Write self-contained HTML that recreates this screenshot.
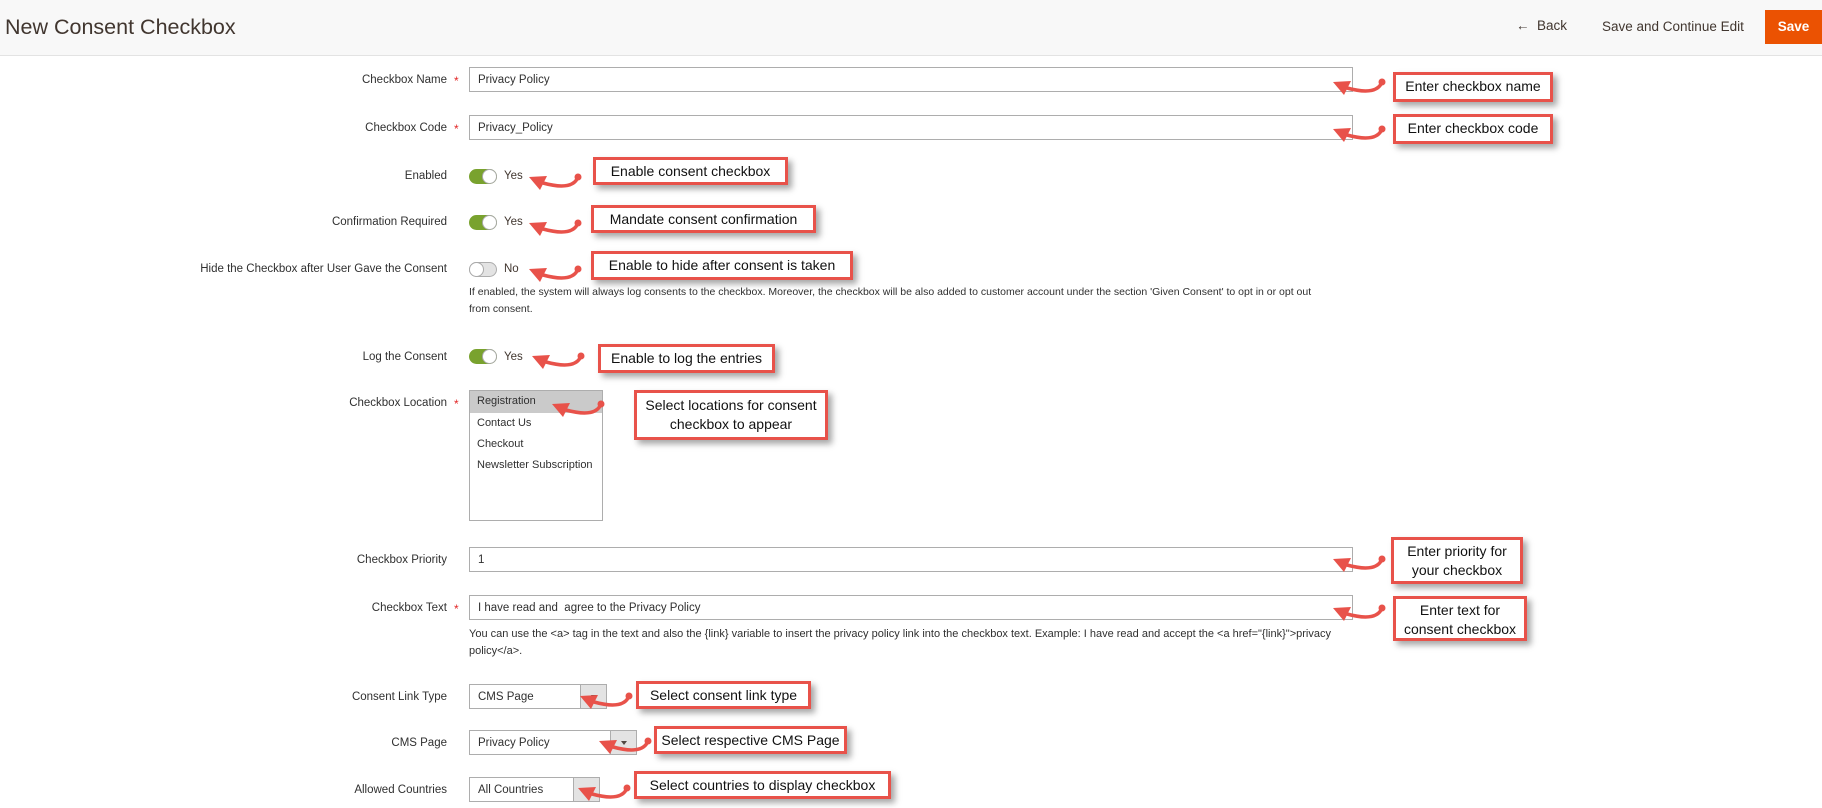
<!DOCTYPE html>
<html><head><meta charset="utf-8"><style>
*{box-sizing:border-box;margin:0;padding:0}
body{width:1822px;height:808px;background:#fff;font-family:"Liberation Sans",sans-serif;color:#303030;position:relative;overflow:hidden}
.a{position:absolute}
.hdr{left:0;top:0;width:1822px;height:56px;background:#f8f8f8;border-bottom:1px solid #e3e3e3}
.lbl{position:absolute;right:1375px;font-size:11.5px;color:#303030;white-space:nowrap;text-align:right}
.req{position:absolute;left:454px;color:#e22626;font-size:12px}
.inp{position:absolute;left:469px;width:884px;height:25px;border:1px solid #adadad;font-size:11.5px;padding:6px 8px;color:#303030;background:#fff}
.tg{position:absolute;left:469px;width:28px;height:15px;border-radius:8px;background:#79a22e}
.tg::after{content:"";position:absolute;right:0;top:0;width:15px;height:15px;border-radius:50%;background:#fff;border:1px solid #aaa;box-sizing:border-box}
.tg.off{background:#e3e3e3;border:1px solid #adadad}
.tg.off::after{left:-1px;top:-1px;right:auto}
.tt{position:absolute;left:504px;font-size:11.5px;color:#41362f}
.help{position:absolute;left:469px;font-size:10.5px;color:#303030;line-height:17px;width:860px}
.co{position:absolute;border:3px solid #e8524a;background:#fff;font-size:14px;color:#111;text-align:center;line-height:19px;box-shadow:4px 4px 6px rgba(0,0,0,.35);white-space:nowrap;padding-top:2px}
.sel{position:absolute;left:469px;height:25px;border:1px solid #adadad;font-size:11.5px;padding:6px 8px;background:#fff}
.sel b{position:absolute;right:0;top:0;width:26px;height:23px;background:#e3e3e3;border-left:1px solid #adadad}
.sel b::after{content:"";position:absolute;left:10px;top:10px;border:3.5px solid transparent;border-top:4px solid #514943}
svg.ar{position:absolute;width:52px;height:20px;overflow:visible}
.loc div{padding:4px 7px;height:21px;white-space:nowrap;font-size:11px}
</style></head><body>
<div class="a hdr"></div>
<div class="a" style="left:5px;top:15px;font-size:21.5px;color:#41362f">New Consent Checkbox</div>
<div class="a" style="left:1516px;top:18px;font-size:13.5px;color:#41362f">&#8592;&nbsp;&nbsp;Back</div>
<div class="a" style="left:1602px;top:19px;font-size:13.5px;color:#41362f">Save and Continue Edit</div>
<div class="a" style="left:1765px;top:10px;width:57px;height:34px;background:#eb5202;color:#fff;font-weight:bold;font-size:13.5px;text-align:center;line-height:34px">Save</div>

<div class="lbl" style="top:74px">Checkbox Name</div><span class="req" style="top:74px">*</span>
<div class="inp" style="top:67px">Privacy Policy</div>
<div class="lbl" style="top:122px">Checkbox Code</div><span class="req" style="top:122px">*</span>
<div class="inp" style="top:115px">Privacy_Policy</div>

<div class="lbl" style="top:170px">Enabled</div>
<div class="tg" style="top:169px"></div><div class="tt" style="top:170px">Yes</div>
<div class="lbl" style="top:216px">Confirmation Required</div>
<div class="tg" style="top:215px"></div><div class="tt" style="top:216px">Yes</div>
<div class="lbl" style="top:263px">Hide the Checkbox after User Gave the Consent</div>
<div class="tg off" style="top:262px"></div><div class="tt" style="top:263px">No</div>
<div class="help" style="top:284px">If enabled, the system will always log consents to the checkbox. Moreover, the checkbox will be also added to customer account under the section 'Given Consent' to opt in or opt out from consent.</div>

<div class="lbl" style="top:351px">Log the Consent</div>
<div class="tg" style="top:349px"></div><div class="tt" style="top:351px">Yes</div>

<div class="lbl" style="top:397px">Checkbox Location</div><span class="req" style="top:397px">*</span>
<div class="a loc" style="left:469px;top:390px;width:134px;height:131px;border:1px solid #adadad;color:#303030">
<div style="background:#cacaca;height:22px">Registration</div>
<div>Contact Us</div>
<div>Checkout</div>
<div>Newsletter Subscription</div>
</div>

<div class="lbl" style="top:554px">Checkbox Priority</div>
<div class="inp" style="top:547px">1</div>
<div class="lbl" style="top:602px">Checkbox Text</div><span class="req" style="top:602px">*</span>
<div class="inp" style="top:595px">I have read and&nbsp; agree to the Privacy Policy</div>
<div class="help" style="top:626px;font-size:11px;width:880px">You can use the &lt;a&gt; tag in the text and also the {link} variable to insert the privacy policy link into the checkbox text. Example: I have read and accept the &lt;a href="{link}"&gt;privacy policy&lt;/a&gt;.</div>

<div class="lbl" style="top:691px">Consent Link Type</div>
<div class="sel" style="top:684px;width:138px">CMS Page<b></b></div>
<div class="lbl" style="top:737px">CMS Page</div>
<div class="sel" style="top:730px;width:168px">Privacy Policy<b></b></div>
<div class="lbl" style="top:784px">Allowed Countries</div>
<div class="sel" style="top:777px;width:131px">All Countries<b></b></div>

<div class="co" style="left:1393px;top:72px;width:160px;height:30px">Enter checkbox name</div>
<div class="co" style="left:1393px;top:114px;width:160px;height:30px">Enter checkbox code</div>
<div class="co" style="left:593px;top:157px;width:195px;height:28px">Enable consent checkbox</div>
<div class="co" style="left:591px;top:205px;width:225px;height:28px">Mandate consent confirmation</div>
<div class="co" style="left:591px;top:251px;width:262px;height:29px">Enable to hide after consent is taken</div>
<div class="co" style="left:598px;top:344px;width:177px;height:29px">Enable to log the entries</div>
<div class="co" style="left:634px;top:390px;width:194px;height:50px;padding-top:3px">Select locations for consent<br>checkbox to appear</div>
<div class="co" style="left:1391px;top:537px;width:132px;height:47px;padding-top:2px">Enter priority for<br>your checkbox</div>
<div class="co" style="left:1393px;top:596px;width:134px;height:45px;padding-top:2px">Enter text for<br>consent checkbox</div>
<div class="co" style="left:636px;top:681px;width:175px;height:28px">Select consent link type</div>
<div class="co" style="left:654px;top:726px;width:193px;height:28px">Select respective CMS Page</div>
<div class="co" style="left:634px;top:771px;width:257px;height:28px">Select countries to display checkbox</div>

<svg width="0" height="0" style="position:absolute"><defs><g id="ar"><path d="M49,3 C46,11 36,15 14,9" fill="none" stroke="#e8524a" stroke-width="3.5" stroke-linecap="round"/><circle cx="49" cy="3" r="3.5" fill="#e8524a"/><polygon points="0,3 18,2 11,16" fill="#e8524a"/></g></defs></svg>
<svg class="ar" style="left:1333px;top:79px"><use href="#ar"/></svg>
<svg class="ar" style="left:1333px;top:126px"><use href="#ar"/></svg>
<svg class="ar" style="left:529px;top:174px"><use href="#ar"/></svg>
<svg class="ar" style="left:529px;top:220px"><use href="#ar"/></svg>
<svg class="ar" style="left:529px;top:266px"><use href="#ar"/></svg>
<svg class="ar" style="left:532px;top:353px"><use href="#ar"/></svg>
<svg class="ar" style="left:552px;top:401px"><use href="#ar"/></svg>
<svg class="ar" style="left:1333px;top:556px"><use href="#ar"/></svg>
<svg class="ar" style="left:1333px;top:605px"><use href="#ar"/></svg>
<svg class="ar" style="left:580px;top:693px"><use href="#ar"/></svg>
<svg class="ar" style="left:599px;top:738px"><use href="#ar"/></svg>
<svg class="ar" style="left:578px;top:785px"><use href="#ar"/></svg>
</body></html>
